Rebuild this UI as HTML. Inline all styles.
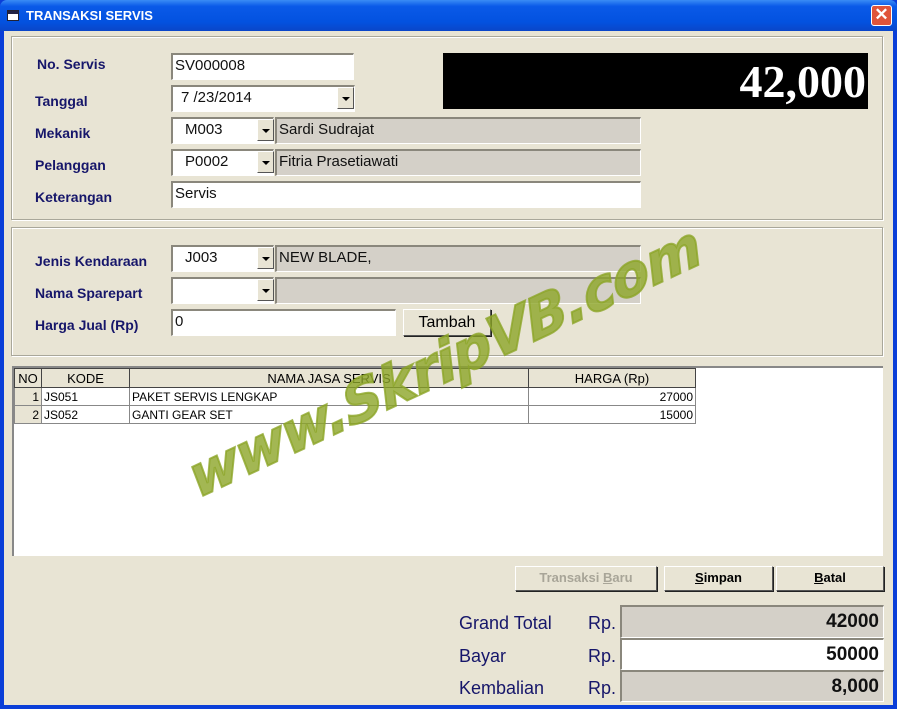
<!DOCTYPE html>
<html><head><meta charset="utf-8"><style>
*{box-sizing:border-box;margin:0;padding:0}
body{width:897px;height:709px;overflow:hidden;background:#0a3ed8;font-family:"Liberation Sans",sans-serif;position:relative}
.a{position:absolute}
#title{left:0;top:0;width:897px;height:31px;background:linear-gradient(#3a8cf5,#0a5ae8 20%,#0352e0 70%,#0a46c8);border-radius:7px 7px 0 0}
#title span{position:absolute;left:26px;top:8px;color:#fff;font-weight:bold;font-size:13px}
#body{left:4px;top:31px;width:889px;height:674px;background:#e8e4d4}
.frame{border:1px solid #a9a79a;box-shadow:inset 1px 1px 0 #fff,1px 1px 0 #fff}
.lbl{color:#16166a;font-weight:bold;font-size:14px}
.in{background:#fff;border-top:2px solid #8a877c;border-left:2px solid #8a877c;border-bottom:1px solid #fff;border-right:1px solid #fff;font-size:15px;padding-left:2px;line-height:22px;color:#111}
.gr{background:#d4d0c8}
.dd{width:17px;height:22px;background:#e8e4d4;border:1px solid #fff;border-right-color:#555;border-bottom-color:#555}
.dd:after{content:"";position:absolute;left:4px;top:9px;border:4px solid transparent;border-top:4px solid #000;border-bottom:0}
.btn{background:#e8e4d4;border:1px solid #fff;border-right-color:#555;border-bottom-color:#555;box-shadow:1px 1px 0 #222;text-align:center;font-size:13px;font-weight:bold;line-height:22px}
table{border-collapse:collapse;font-size:12px;font-family:"Liberation Sans",sans-serif}
td{border:1px solid #888;height:18px;padding:0 2px;white-space:nowrap}
th{border:1px solid #444;background:#e8e4d4;font-weight:normal;font-size:13px;height:19px}
.bl{color:#16166a;font-size:18px}
</style></head><body>
<div id="title" class="a"><svg class="a" style="left:7px;top:10px" width="12" height="11"><rect x="0.5" y="0.5" width="11" height="10" fill="#fff" stroke="#223"/><rect x="1" y="1" width="10" height="3" fill="#224"/></svg><span>TRANSAKSI SERVIS</span>
<div class="a" style="left:871px;top:5px;width:21px;height:21px;background:#e0543a;border:1px solid #fff;border-radius:3px;color:#fff;font-weight:bold;font-size:17px;line-height:18px;text-align:center">✕</div></div>
<div id="body" class="a"></div>
<div class="a frame" style="left:11px;top:36px;width:872px;height:184px"></div>
<div class="a frame" style="left:11px;top:227px;width:872px;height:129px"></div>

<div class="a lbl" style="left:37px;top:56px">No. Servis</div>
<div class="a lbl" style="left:35px;top:93px">Tanggal</div>
<div class="a lbl" style="left:35px;top:125px">Mekanik</div>
<div class="a lbl" style="left:35px;top:157px">Pelanggan</div>
<div class="a lbl" style="left:35px;top:189px">Keterangan</div>

<div class="a in" style="left:171px;top:53px;width:183px;height:27px">SV000008</div>
<div class="a in" style="left:171px;top:85px;width:184px;height:27px;padding-left:8px">7 /23/2014</div>
<div class="a dd" style="left:337px;top:87px"></div>
<div class="a in" style="left:171px;top:117px;width:103px;height:27px;padding-left:12px">M003</div>
<div class="a dd" style="left:257px;top:119px"></div>
<div class="a in gr" style="left:275px;top:117px;width:366px;height:27px">Sardi Sudrajat</div>
<div class="a in" style="left:171px;top:149px;width:103px;height:27px;padding-left:12px">P0002</div>
<div class="a dd" style="left:257px;top:151px"></div>
<div class="a in gr" style="left:275px;top:149px;width:366px;height:27px">Fitria Prasetiawati</div>
<div class="a in" style="left:171px;top:181px;width:470px;height:27px">Servis</div>

<div class="a" style="left:443px;top:53px;width:425px;height:56px;background:#000;color:#fff;font-family:'Liberation Serif',serif;font-weight:bold;font-size:46px;text-align:right;padding-right:2px;line-height:58px">42,000</div>

<div class="a lbl" style="left:35px;top:253px">Jenis Kendaraan</div>
<div class="a lbl" style="left:35px;top:285px">Nama Sparepart</div>
<div class="a lbl" style="left:35px;top:317px">Harga Jual (Rp)</div>
<div class="a in" style="left:171px;top:245px;width:103px;height:27px;padding-left:12px">J003</div>
<div class="a dd" style="left:257px;top:247px"></div>
<div class="a in gr" style="left:275px;top:245px;width:366px;height:27px">NEW BLADE,</div>
<div class="a in" style="left:171px;top:277px;width:103px;height:27px"></div>
<div class="a dd" style="left:257px;top:279px"></div>
<div class="a in gr" style="left:275px;top:277px;width:366px;height:27px"></div>
<div class="a in" style="left:171px;top:309px;width:225px;height:27px">0</div>
<div class="a btn" style="left:403px;top:309px;width:88px;height:27px;font-weight:normal;font-size:16px;line-height:25px">Tambah</div>

<div class="a" style="left:12px;top:366px;width:871px;height:190px;background:#fff;border-top:2px solid #888;border-left:2px solid #888">
<table class="a" style="left:0;top:0;width:682px">
<tr><th style="width:27px">NO</th><th style="width:88px">KODE</th><th style="width:399px">NAMA JASA SERVIS</th><th>HARGA (Rp)</th></tr>
<tr><td style="background:#e8e4d4;text-align:right">1</td><td>JS051</td><td>PAKET SERVIS LENGKAP</td><td style="text-align:right">27000</td></tr>
<tr><td style="background:#e8e4d4;text-align:right">2</td><td>JS052</td><td>GANTI GEAR SET</td><td style="text-align:right">15000</td></tr>
</table></div>

<div class="a btn" style="left:515px;top:566px;width:142px;height:25px;color:#a8a598;font-weight:bold">Transaksi <u>B</u>aru</div>
<div class="a btn" style="left:664px;top:566px;width:109px;height:25px"><u>S</u>impan</div>
<div class="a btn" style="left:776px;top:566px;width:108px;height:25px"><u>B</u>atal</div>

<div class="a bl" style="left:459px;top:613px">Grand Total</div>
<div class="a bl" style="left:459px;top:646px">Bayar</div>
<div class="a bl" style="left:459px;top:678px">Kembalian</div>
<div class="a bl" style="left:588px;top:613px">Rp.</div>
<div class="a bl" style="left:588px;top:646px">Rp.</div>
<div class="a bl" style="left:588px;top:678px">Rp.</div>
<div class="a in gr" style="left:620px;top:605px;width:264px;height:33px;text-align:right;font-weight:bold;font-size:19px;line-height:30px;padding-right:4px">42000</div>
<div class="a in" style="left:620px;top:638px;width:264px;height:32px;text-align:right;font-weight:bold;font-size:19px;line-height:29px;padding-right:4px">50000</div>
<div class="a in gr" style="left:620px;top:670px;width:264px;height:32px;text-align:right;font-weight:bold;font-size:19px;line-height:29px;padding-right:4px">8,000</div>

<div class="a" style="left:145px;top:330px;width:600px;text-align:center;transform:rotate(-25deg) skewX(-8deg);font-family:'DejaVu Sans',sans-serif;font-weight:bold;font-style:italic;font-size:56px;color:rgba(140,165,40,0.8);white-space:nowrap;letter-spacing:-1px;-webkit-text-stroke:2px rgba(140,165,40,0.8)">www.SkripVB.com</div>
</body></html>
